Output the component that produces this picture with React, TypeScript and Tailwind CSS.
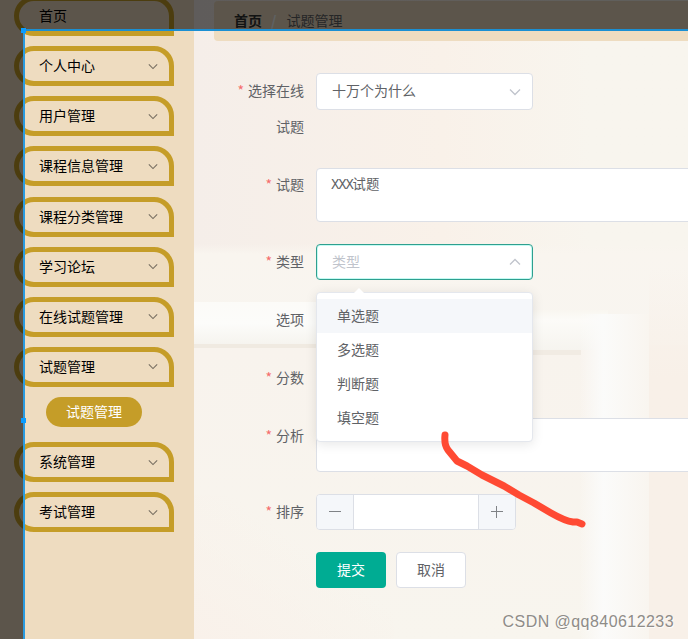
import { useState } from 'react'

interface MenuItem {
  name: string
  arrow: boolean
  children?: string[]
}

const menus: MenuItem[] = [
  { name: '首页', arrow: false },
  { name: '个人中心', arrow: true },
  { name: '用户管理', arrow: true },
  { name: '课程信息管理', arrow: true },
  { name: '课程分类管理', arrow: true },
  { name: '学习论坛', arrow: true },
  { name: '在线试题管理', arrow: true },
  { name: '试题管理', arrow: true, children: ['试题管理'] },
  { name: '系统管理', arrow: true },
  { name: '考试管理', arrow: true },
]

const typeOptions = ['单选题', '多选题', '判断题', '填空题']

function Chevron({ up, className }: { up?: boolean; className: string }) {
  return (
    <svg className={className} viewBox="0 0 12 8" fill="none" stroke="currentColor" strokeWidth="1.3">
      <path d={up ? 'M1 6.5 6 1.5l5 5' : 'M1 1.5l5 5 5-5'} />
    </svg>
  )
}

function Sidebar() {
  return (
    <aside className="w-[194px] shrink-0 bg-[#eedcc0] pl-[14px]">
      <ul className="-mt-1">
        {menus.map((menu) => (
          <li key={menu.name} className="mb-[10.13px]">
            <div className="flex h-10 w-40 items-center justify-between rounded-[20px] rounded-br-none border-[5px] border-[#c59d28] pr-[11px] pl-5 text-sm text-black">
              <span className="pb-0.5">{menu.name}</span>
              {menu.arrow && <Chevron className="h-[7px] w-[10px] text-[#766e61]" />}
            </div>
            {menu.children && (
              <ul className="pt-[10.1px] pb-[5px] pl-8">
                {menu.children.map((child) => (
                  <li
                    key={child}
                    className="flex h-[30px] w-24 items-center justify-center rounded-full bg-[#c59d28] pb-0.5 text-sm text-white"
                  >
                    {child}
                  </li>
                ))}
              </ul>
            )}
          </li>
        ))}
      </ul>
    </aside>
  )
}

function FormRow({ label, required, className, children }: {
  label: string
  required?: boolean
  className: string
  children?: React.ReactNode
}) {
  return (
    <div className={`flex ${className}`}>
      <div className="-mt-px ml-[22px] w-[80px] shrink-0 pr-3 text-right -indent-[12px] leading-9 text-[#606266]">
        {required && <span className="mr-1 text-[#f56c6c]">*</span>}
        {label}
      </div>
      {children}
    </div>
  )
}

// Soft light photo behind the form
function Backdrop() {
  return (
    <div className="absolute inset-0 overflow-hidden bg-linear-to-r from-[#f5eee9] via-[#f9f1e9] via-50% to-[#f8f5ee] to-80%">
      <div className="absolute inset-x-0 top-[244px] h-[101px] bg-linear-to-b from-[#f9f4ee]/0 via-[#f9f5ef] via-10% to-[#f8f5f0]" />
      <div className="absolute inset-x-0 top-[345px] bottom-0 bg-linear-to-b from-[#f8f3ed] to-[#f8f5ee]" />
      <div className="absolute bottom-0 left-0 h-36 w-[200px] bg-linear-to-tr from-[#f9f1ea] to-[#f9f1ea]/0 to-60%" />
      <div className="absolute top-[302px] left-0 h-[42px] w-[200px] bg-linear-to-b from-[#fcfbf8] via-[#fcfcfa] to-[#f6f4ef]" />
      <div className="absolute top-[344px] left-0 h-1 w-[130px] bg-[#f0eae1]" />
      <div className="absolute top-[310px] right-[80px] left-[330px] h-[40px] bg-linear-to-b from-[#f9f6f0] via-[#fcfbf8] via-25% to-[#f6f4ef]" />
      <div className="absolute top-[314px] bottom-0 left-[385px] w-[70px] bg-linear-to-r from-[#f8f5ef]/0 via-[#fbfbfa] via-35% to-[#f9f5ef]" />
      <div className="absolute top-[350px] left-[330px] h-[5px] w-[57px] bg-[#f1ebe3]" />
      <div className="absolute top-[267px] right-0 bottom-0 left-[455px] bg-linear-to-b from-[#f9f1e8]/0 to-[#f8f0e8] to-30%" />
    </div>
  )
}

export default function App() {
  const [sort, setSort] = useState('')

  return (
    <div className="relative flex h-[639px] w-[688px] overflow-hidden font-['Noto_Sans_CJK_SC',sans-serif] text-sm">
      <Sidebar />

      <main className="relative flex-1 overflow-hidden">
        <Backdrop />
        <div className="relative w-[520px] pt-px pl-5">
          <nav className="flex h-10 items-center rounded bg-[#eedcc0] pb-0.5 pl-5">
            <span className="font-bold text-[#303133]">首页</span>
            <span className="mr-[10px] ml-[9px] font-bold text-[#f4fbff]">/</span>
            <span className="text-[#606266]">试题管理</span>
          </nav>

          <form className="pt-8">
            <FormRow label="选择在线试题" required className="mb-[22px] h-[72px]">
              <div className="flex h-[37px] w-[217px] items-center justify-between rounded border border-[#dcdfe6] bg-white pr-[11px] pl-[15px] text-[#606266]">
                <span className="pb-[3px]">十万个为什么</span>
                <Chevron className="h-2 w-3 text-[#c0c4cc]" />
              </div>
            </FormRow>

            <FormRow label="试题" required className="mb-[22px] h-[55px]">
              <div
                role="textbox"
                className="mt-px h-[54px] flex-1 rounded border border-[#dcdfe6] bg-white px-[14px] py-1 text-[13.333px] leading-[21px] text-[#606266]"
              >
                <span className="font-['Liberation_Mono',monospace] text-sm leading-[21px] tracking-[-1.2px]">XXX</span>
                试题
              </div>
            </FormRow>

            <FormRow label="类型" required className="mb-[22px] h-9">
              <div className="relative">
                <div className="flex h-9 w-[217px] items-center justify-between rounded border border-[#2f9f8f] bg-white pr-[11px] pl-[15px] text-[#c0c4cc] shadow-[inset_0_0_0_1px_#c4fbf3]">
                  <span className="pb-0.5">类型</span>
                  <Chevron up className="h-2 w-3" />
                </div>
                <div className="absolute top-12 left-0 z-10 w-[217px] rounded border border-[#e4e7ed] bg-white py-1.5 shadow-[0_2px_12px_rgba(0,0,0,0.1)]">
                  <span className="absolute -top-[5px] left-9 size-0 border-x-[6px] border-b-[6px] border-x-transparent border-b-white" />
                  {typeOptions.map((option, i) => (
                    <div
                      key={option}
                      className={`h-[34px] px-5 leading-8 text-[#606266] ${i === 0 ? 'bg-[#f5f7fa]' : ''}`}
                    >
                      {option}
                    </div>
                  ))}
                </div>
              </div>
            </FormRow>

            <FormRow label="选项" className="mb-[22px] h-9" />
            <FormRow label="分数" required className="mb-[22px] h-9" />

            <FormRow label="分析" required className="mb-[22px] h-[54px]">
              <textarea className="h-[54px] flex-1 resize-none rounded border border-[#dcdfe6] bg-white outline-none" />
            </FormRow>

            <FormRow label="排序" required className="mb-[22px] h-9">
              <div className="flex h-9 w-[200px] overflow-hidden rounded border border-[#dcdfe6] bg-white text-[#7f8286]">
                <button type="button" className="flex w-[37px] items-center justify-center border-r border-[#dcdfe6] bg-[#f5f7fa]">
                  <svg className="size-3" viewBox="0 0 12 12" stroke="currentColor" strokeWidth="1">
                    <path d="M0 5.5h12" />
                  </svg>
                </button>
                <input className="min-w-0 flex-1 text-center outline-none" value={sort} onChange={(e) => setSort(e.target.value)} />
                <button type="button" className="flex w-[37px] items-center justify-center border-l border-[#dcdfe6] bg-[#f5f7fa]">
                  <svg className="size-3" viewBox="0 0 12 12" stroke="currentColor" strokeWidth="1">
                    <path d="M0 5.5h12M5.5 0v12" />
                  </svg>
                </button>
              </div>
            </FormRow>

            <div className="flex gap-[10px] pl-[102px]">
              <button type="button" className="h-9 w-[70px] rounded bg-[#00ac93] pb-0.5 text-white">提交</button>
              <button type="button" className="h-9 w-[70px] rounded border border-[#dcdfe6] bg-white pb-0.5 text-[#606266]">取消</button>
            </div>
          </form>
        </div>
      </main>

      {/* selection mask and its frame */}
      <div className="pointer-events-none absolute top-[29px] left-[23px] z-20 h-[700px] w-[800px] border-2 border-[#1b8fd2] border-l-[#2a9be0] shadow-[0_0_0_900px_rgba(0,0,0,0.61)]">
        <span className="absolute -top-[3px] -left-1 size-[5px] bg-[#0a9cff]" />
        <span className="absolute top-[387px] -left-1 size-[5px] bg-[#0a9cff]" />
      </div>

      <svg className="pointer-events-none absolute top-[425px] left-[435px] z-30 h-[110px] w-[155px]" viewBox="0 0 155 110" fill="none">
        <path
          d="M10 10Q9 20 13 25L22 36 32 41 47 50 69 61 84 70 99 78 116 88Q130 96 138 97L142 97 147 99"
          stroke="#ff4a33"
          strokeWidth="7"
          strokeLinecap="round"
          strokeLinejoin="round"
        />
      </svg>

      <p className="absolute right-[14px] bottom-[7px] z-30 font-['Liberation_Sans',sans-serif] text-base leading-5 tracking-[0.44px] text-[#8f8c88] [text-shadow:1px_1px_0_rgba(255,255,255,0.8)]">
        CSDN @qq840612233
      </p>
    </div>
  )
}
